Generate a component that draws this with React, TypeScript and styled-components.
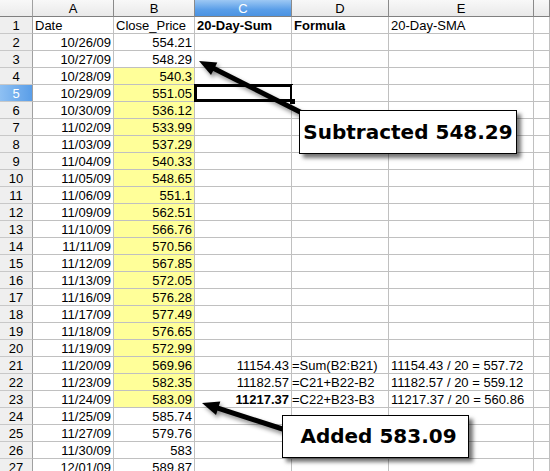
import React from 'react';
import styled, { createGlobalStyle, css } from 'styled-components';

const Global = createGlobalStyle`
  html, body { margin: 0; padding: 0; background: #fff; overflow: hidden; }
`;

const Stage = styled.div`
  position: relative;
  width: 550px;
  height: 471px;
  overflow: hidden;
  font-family: "Liberation Sans", Arial, sans-serif;
  font-size: 13px;
  line-height: 17px;
  color: #000;
  background: #fff;
`;

const Sheet = styled.div`
  display: grid;
  grid-template-columns: 33px 81px 81px 97px 97px 145px 1fr;
  grid-auto-rows: 17px;
`;

const Corner = styled.div`
  box-sizing: border-box;
  background: linear-gradient(#f8f8f8, #ebebeb);
  border-right: 1px solid #a0a0a0;
  border-bottom: 1px solid #808080;
`;

const ColHead = styled.div<{ $active?: boolean }>`
  box-sizing: border-box;
  text-align: center;
  background: linear-gradient(#f8f8f8, #e9e9e9);
  border-right: 1px solid #8a8a8a;
  border-bottom: 1px solid #808080;
  ${(p) =>
    p.$active &&
    css`
      background: linear-gradient(#9dc8f4, #5a9ee8 60%, #4b93e2);
      color: #fff;
    `}
`;

const RowHead = styled.div<{ $active?: boolean }>`
  box-sizing: border-box;
  text-align: center;
  background: #efefef;
  border-right: 1px solid #a0a0a0;
  border-bottom: 1px solid #c8c8c8;
  ${(p) =>
    p.$active &&
    css`
      background: linear-gradient(90deg, #8ec0f3, #5a9ee8);
      color: #fff;
    `}
`;

const Cell = styled.div<{ $right?: boolean; $bold?: boolean; $yellow?: boolean; $selected?: boolean; $pad?: number }>`
  position: relative;
  box-sizing: border-box;
  white-space: nowrap;
  overflow: visible;
  padding: 0 ${(p) => (p.$right ? 2 : 0)}px 0 ${(p) => p.$pad ?? 2}px;
  text-align: ${(p) => (p.$right ? 'right' : 'left')};
  font-weight: ${(p) => (p.$bold ? 700 : 400)};
  background: ${(p) => (p.$yellow ? '#ffff99' : '#fff')};
  border-right: 1px solid #c0c0c0;
  border-bottom: 1px solid #c0c0c0;
  ${(p) =>
    p.$selected &&
    css`
      &::after {
        content: '';
        position: absolute;
        left: -1px;
        top: -1px;
        right: -2px;
        bottom: -1px;
        border: 3px solid #000;
        box-sizing: border-box;
      }
      &::before {
        content: '';
        position: absolute;
        right: -4px;
        bottom: -3px;
        width: 5px;
        height: 5px;
        background: #000;
        z-index: 1;
      }
    `}
`;

const Overlay = styled.svg`
  position: absolute;
  left: 0;
  top: 0;
  width: 550px;
  height: 471px;
  pointer-events: none;
  filter: drop-shadow(2px 3px 2px rgba(0, 0, 0, 0.45));
`;

const Callout = styled.div`
  position: absolute;
  box-sizing: border-box;
  display: flex;
  align-items: center;
  justify-content: center;
  background: #fff;
  border: 1px solid #000;
  box-shadow: 4px 4px 4px rgba(0, 0, 0, 0.55);
  font-family: "DejaVu Sans", Verdana, sans-serif;
  font-weight: 700;
  font-size: 20px;
  color: #000;
`;

type Row = { date: string; price: string; sum?: string; formula?: string; sma?: string; boldSum?: boolean };

const rows: Row[] = [
  { date: '10/26/09', price: '554.21' },
  { date: '10/27/09', price: '548.29' },
  { date: '10/28/09', price: '540.3' },
  { date: '10/29/09', price: '551.05' },
  { date: '10/30/09', price: '536.12' },
  { date: '11/02/09', price: '533.99' },
  { date: '11/03/09', price: '537.29' },
  { date: '11/04/09', price: '540.33' },
  { date: '11/05/09', price: '548.65' },
  { date: '11/06/09', price: '551.1' },
  { date: '11/09/09', price: '562.51' },
  { date: '11/10/09', price: '566.76' },
  { date: '11/11/09', price: '570.56' },
  { date: '11/12/09', price: '567.85' },
  { date: '11/13/09', price: '572.05' },
  { date: '11/16/09', price: '576.28' },
  { date: '11/17/09', price: '577.49' },
  { date: '11/18/09', price: '576.65' },
  { date: '11/19/09', price: '572.99' },
  { date: '11/20/09', price: '569.96', sum: '11154.43', formula: '=Sum(B2:B21)', sma: '11154.43 / 20 = 557.72' },
  { date: '11/23/09', price: '582.35', sum: '11182.57', formula: '=C21+B22-B2', sma: '11182.57 / 20 = 559.12' },
  { date: '11/24/09', price: '583.09', sum: '11217.37', formula: '=C22+B23-B3', sma: '11217.37 / 20 = 560.86', boldSum: true },
  { date: '11/25/09', price: '585.74' },
  { date: '11/27/09', price: '579.76' },
  { date: '11/30/09', price: '583' },
  { date: '12/01/09', price: '589.87' },
];

const Arrow = ({ tip, tail, len = 17, half = 7 }: { tip: [number, number]; tail: [number, number]; len?: number; half?: number }) => {
  const dx = tail[0] - tip[0];
  const dy = tail[1] - tip[1];
  const d = Math.hypot(dx, dy);
  const ux = dx / d;
  const uy = dy / d;
  const px = -uy;
  const py = ux;
  const bx = tip[0] + ux * len;
  const by = tip[1] + uy * len;
  const pts = `${tip[0]},${tip[1]} ${bx + px * half},${by + py * half} ${bx - px * half},${by - py * half}`;
  return (
    <g>
      <line x1={bx - ux * 2} y1={by - uy * 2} x2={tail[0]} y2={tail[1]} stroke="#000" strokeWidth={5} />
      <polygon points={pts} fill="#000" />
    </g>
  );
};

export default function App() {
  return (
    <Stage>
      <Global />
      <Sheet>
        <Corner />
        <ColHead>A</ColHead>
        <ColHead>B</ColHead>
        <ColHead $active>C</ColHead>
        <ColHead>D</ColHead>
        <ColHead>E</ColHead>
        <ColHead />

        <RowHead>1</RowHead>
        <Cell>Date</Cell>
        <Cell>Close_Price</Cell>
        <Cell $bold>20-Day-Sum</Cell>
        <Cell $bold>Formula</Cell>
        <Cell>20-Day-SMA</Cell>
        <Cell />

        {rows.map((r, i) => {
          const n = i + 2;
          return (
            <React.Fragment key={n}>
              <RowHead $active={n === 5}>{n}</RowHead>
              <Cell $right>{r.date}</Cell>
              <Cell $right $yellow={n >= 4 && n <= 23}>{r.price}</Cell>
              <Cell $right $bold={r.boldSum} $selected={n === 5}>{r.sum}</Cell>
              <Cell $pad={0}>{r.formula}</Cell>
              <Cell>{r.sma}</Cell>
              <Cell />
            </React.Fragment>
          );
        })}
      </Sheet>

      <Overlay viewBox="0 0 550 471">
        <Arrow tip={[199, 61]} tail={[312, 118]} />
        <Arrow tip={[202, 403]} tail={[295, 433]} />
      </Overlay>

      <Callout style={{ left: 299, top: 110, width: 218, height: 44 }}>Subtracted 548.29</Callout>
      <Callout style={{ left: 282, top: 415, width: 187, height: 43, paddingLeft: 6 }}>Added 583.09</Callout>
    </Stage>
  );
}
